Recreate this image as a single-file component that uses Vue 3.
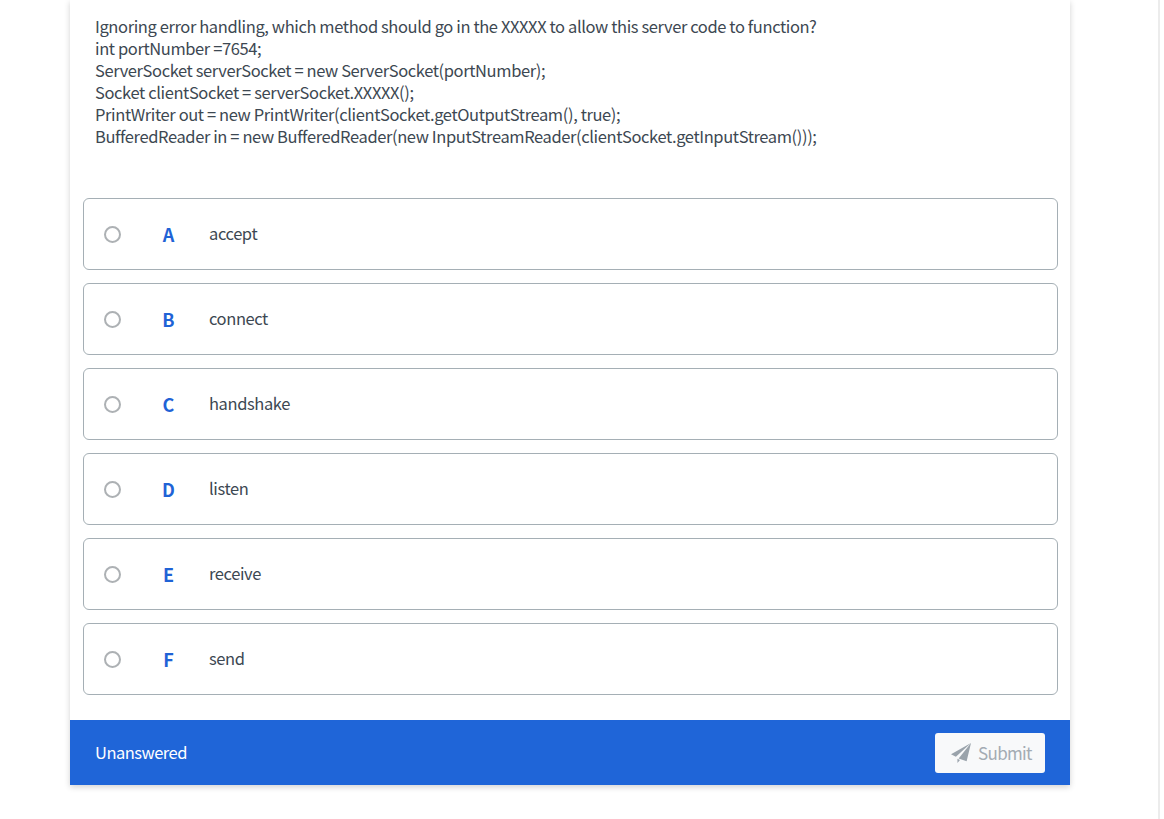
<script setup>
const lines = [
  'Ignoring error handling, which method should go in the XXXXX to allow this server code to function?',
  'int portNumber =7654;',
  'ServerSocket serverSocket = new ServerSocket(portNumber);',
  'Socket clientSocket = serverSocket.XXXXX();',
  'PrintWriter out = new PrintWriter(clientSocket.getOutputStream(), true);',
  'BufferedReader in = new BufferedReader(new InputStreamReader(clientSocket.getInputStream()));'
]

const options = [
  { key: 'A', text: 'accept' },
  { key: 'B', text: 'connect' },
  { key: 'C', text: 'handshake' },
  { key: 'D', text: 'listen' },
  { key: 'E', text: 'receive' },
  { key: 'F', text: 'send' }
]
</script>

<template>
  <div class="page">
    <div class="content">
      <div class="card">
        <div class="question">
          <div v-for="line in lines" :key="line">{{ line }}</div>
        </div>

        <div class="options">
          <label v-for="opt in options" :key="opt.key" class="option">
            <span class="radio"></span>
            <span class="letter">{{ opt.key }}</span>
            <span class="text">{{ opt.text }}</span>
          </label>
        </div>

        <div class="footer">
          <span class="status">Unanswered</span>
          <button class="submit" disabled>
            <svg class="plane" viewBox="0 0 512 512" width="20" height="20">
              <path fill="currentColor" d="M512 0 0 285l125 65L512 0 195 395l205 75zM165 405v107l65-75z" />
            </svg>
            <span class="submit-label">Submit</span>
          </button>
        </div>
      </div>
    </div>
  </div>
</template>

<style scoped>
.page {
  width: 1158px;
  height: 819px;
  background: #fff;
  border-right: 2px solid #ececec;
  font-family: "Noto Sans CJK SC", "Noto Sans", sans-serif;
}

.content {
  padding-left: 70px;
}

.card {
  width: 1000px;
  background: #fff;
  box-shadow: 0 2px 6px rgba(0, 0, 0, 0.18);
}

.question {
  padding: 15px 25px 0;
  height: 198px;
  box-sizing: border-box;
  font-size: 16.5px;
  line-height: 22px;
  letter-spacing: -0.39px;
  color: #3d4852;
}

.options {
  display: flex;
  flex-direction: column;
  gap: 13px;
  padding: 0 12px 25px 13px;
}

.option {
  display: flex;
  align-items: center;
  height: 72px;
  box-sizing: border-box;
  border: 1px solid #a5afb5;
  border-radius: 6px;
  background: #fff;
}

.radio {
  width: 17px;
  height: 17px;
  box-sizing: border-box;
  margin-left: 20px;
  border: 2px solid #adb1b4;
  border-radius: 50%;
}

.letter {
  width: 24px;
  margin: 0 28.5px 0 35.5px;
  color: #1f63d6;
  font-size: 18px;
  font-weight: 700;
  line-height: 22px;
  text-align: center;
}

.text {
  color: #3d4852;
  font-size: 16.5px;
  letter-spacing: -0.4px;
  line-height: 21px;
  padding-bottom: 2px;
}

.footer {
  display: flex;
  align-items: center;
  justify-content: space-between;
  height: 65px;
  padding: 0 25px;
  background: #1f65d8;
}

.status {
  color: #fff;
  font-size: 16.5px;
  letter-spacing: -0.5px;
  padding-bottom: 2px;
}

.submit {
  display: flex;
  align-items: center;
  gap: 7px;
  width: 110px;
  height: 40px;
  padding: 0 0 0 16px;
  border: none;
  border-radius: 3px;
  background: #f8f9fa;
  color: #a3abb3;
  font-family: inherit;
  font-size: 17px;
  letter-spacing: -0.65px;
}

.submit-label {
  padding-bottom: 1px;
}

.plane {
  color: #9aa3ab;
}
</style>

<style>
html, body {
  margin: 0;
  overflow: hidden;
  background: #fff;
}
</style>
